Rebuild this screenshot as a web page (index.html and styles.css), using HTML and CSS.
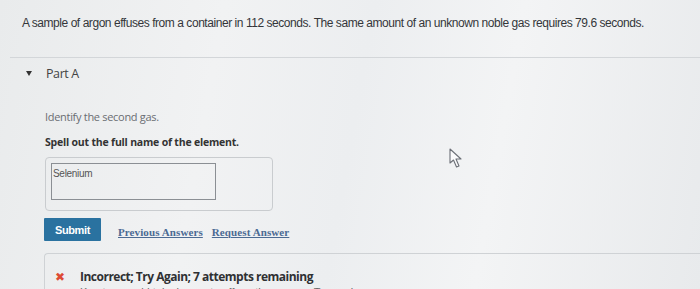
FILE: index.html
```html
<!DOCTYPE html>
<html>
<head>
<meta charset="utf-8">
<link rel="stylesheet" href="styles.css">
</head>
<body>
<div class="page">
  <p class="problem">A sample of argon effuses from a container in 112 seconds. The same amount of an unknown noble gas requires 79.6 seconds.</p>
  <div class="part">
    <div class="part-head">
      <span class="caret"></span>
      <span class="part-title">Part A</span>
    </div>
    <div class="part-body">
      <p class="prompt">Identify the second gas.</p>
      <p class="instr">Spell out the full name of the element.</p>
      <div class="answer-box">
        <div class="input">Selenium</div>
      </div>
      <div class="actions">
        <button class="submit">Submit</button>
        <a class="link">Previous Answers</a>
        <a class="link">Request Answer</a>
      </div>
      <div class="feedback">
        <div class="fb-row">
          <span class="fb-x">&#10006;</span>
          <span class="fb-title">Incorrect; Try Again; 7 attempts remaining</span>
        </div>
        <div class="fb-text">Krypton would take longer to effuse than argon. Try again.</div>
      </div>
    </div>
  </div>
  <svg class="cursor" width="14" height="21" viewBox="0 0 14 21">
    <path d="M1 1 L1 15 L4.5 12 L7.5 19 L10 18 L7 11 L12 11 Z" fill="#fbfbfc" stroke="#6c7077" stroke-width="1.1" stroke-linejoin="round"/>
  </svg>
</div>
</body>
</html>
```
FILE: styles.css
```css
html, body {
  margin: 0;
  padding: 0;
}
body {
  width: 700px;
  height: 289px;
  overflow: hidden;
  background: linear-gradient(100deg, #e9ebec 0%, #f1f2f3 30%, #eceef0 50%, #f3f4f5 70%, #e8eaec 100%);
  font-family: "Liberation Sans", Arial, sans-serif;
  color: #333;
}
.page {
  position: relative;
  height: 289px;
  overflow: hidden;
}
.problem {
  margin: 0 0 0 10px;
  padding: 16px 0 0 12px;
  height: 58px;
  box-sizing: border-box;
  border-bottom: 1px solid #d3d6d9;
  font-size: 12px;
  letter-spacing: -0.45px;
  color: #34363a;
}
.part-head {
  display: flex;
  align-items: center;
  height: 30px;
  padding-left: 26px;
}
.caret {
  width: 0;
  height: 0;
  border-left: 3.5px solid transparent;
  border-right: 3.5px solid transparent;
  border-top: 5px solid #333;
  margin-right: 14px;
}
.part-title {
  font-family: "Open Sans", sans-serif;
  font-size: 12.5px;
  color: #444;
  letter-spacing: -0.4px;
}
.part-body {
  padding-left: 45px;
  padding-top: 22px;
}
.prompt {
  margin: 0;
  font-family: "Open Sans", sans-serif;
  font-size: 11px;
  letter-spacing: -0.3px;
  color: #6a6d72;
  line-height: 14px;
}
.instr {
  margin: 11px 0 0;
  font-family: "Open Sans", sans-serif;
  font-size: 10.5px;
  font-weight: bold;
  letter-spacing: -0.2px;
  color: #333;
  line-height: 14px;
}
.answer-box {
  margin-top: 8px;
  width: 228px;
  height: 54px;
  box-sizing: border-box;
  border: 1px solid #c9cccf;
  border-radius: 4px;
  padding: 5px 0 0 5px;
}
.input {
  width: 165px;
  height: 37px;
  box-sizing: border-box;
  border: 1px solid #8b8f94;
  font-size: 10px;
  letter-spacing: -0.3px;
  color: #555;
  padding: 4px 0 0 1px;
}
.actions {
  display: flex;
  align-items: center;
  margin-top: 7px;
  margin-left: -1px;
}
.submit {
  width: 57px;
  height: 23px;
  border: none;
  border-radius: 1px;
  background: #2a72a0;
  color: #fff;
  font-family: "Liberation Sans", Arial, sans-serif;
  font-size: 11px;
  font-weight: bold;
  letter-spacing: -0.4px;
  padding: 0;
  margin-right: 17px;
}
.link {
  font-family: "Liberation Serif", serif;
  font-weight: bold;
  font-size: 11px;
  color: #4b6a93;
  text-decoration: underline;
  margin-right: 9px;
  margin-top: 4px;
  letter-spacing: 0.1px;
}
.feedback {
  margin-top: 12px;
  margin-left: -1px;
  border: 1px solid #cfd2d5;
  border-right: none;
  border-radius: 4px 0 0 0;
  padding: 14px 0 0 10px;
  height: 60px;
}
.fb-row {
  display: flex;
  align-items: center;
}
.fb-x {
  color: #dd4b34;
  font-size: 12px;
  width: 25px;
}
.fb-title {
  font-family: "Open Sans", sans-serif;
  font-weight: bold;
  font-size: 12px;
  letter-spacing: -0.5px;
  color: #2f3033;
}
.fb-text {
  margin-left: 25px;
  margin-top: 1px;
  font-size: 11px;
  color: #666;
}
.cursor {
  position: absolute;
  left: 449px;
  top: 148px;
}
```
